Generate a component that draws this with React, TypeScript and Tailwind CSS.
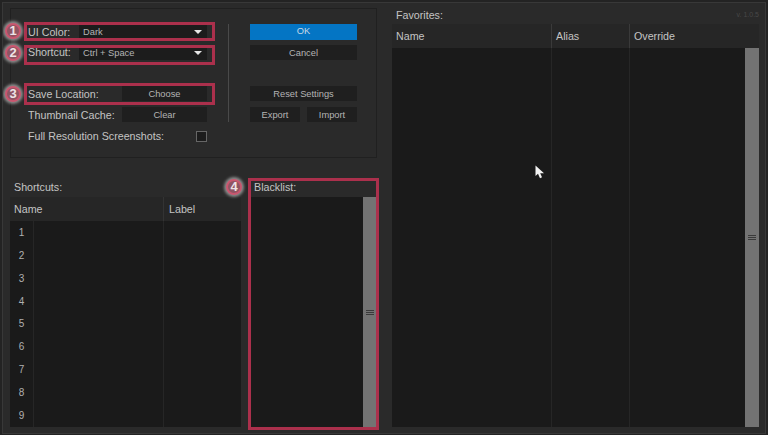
const rows = [1, 2, 3, 4, 5, 6, 7, 8, 9];

const Btn = ({ label, className = '' }: { label: string; className?: string }) => (
  <div className={`flex h-[15px] items-center justify-center bg-[#1f1f1f] pt-[2px] text-[9.3px] text-[#b4b4b4] ${className}`}>
    {label}
  </div>
);

const Select = ({ label }: { label: string }) => (
  <div className="flex h-[15px] w-[128px] items-center justify-between bg-[#1c1c1c] pl-[4px] pr-[5px] text-[9.3px] text-[#b4b4b4]">
    <span className="mt-[2px]">{label}</span>
    <svg width="8" height="4" viewBox="0 0 8 4">
      <path d="M0 0h8L4 4z" fill="#e6e6e6" />
    </svg>
  </div>
);

const Grip = () => (
  <div className="flex w-[8px] flex-col gap-[1px]">
    <div className="h-[1px] bg-[#3a3a3a]" />
    <div className="h-[1px] bg-[#3a3a3a]" />
    <div className="h-[1px] bg-[#3a3a3a]" />
  </div>
);

const Badge = ({ n, className }: { n: number; className: string }) => (
  <div
    className={`absolute flex h-[16px] w-[16px] items-center justify-center rounded-full border-[2px] border-[#c9566f] bg-[#8f5563] text-[13px] font-bold text-[#efe3e6] shadow-[0_0_3px_2px_#8f8f8f] ${className}`}
  >
    {n}
  </div>
);

const RedBox = ({ className }: { className: string }) => (
  <div className={`absolute border-[3px] border-[#ab304c] ${className}`} />
);

export default function App() {
  return (
    <div className="relative flex h-[435px] w-[768px] overflow-hidden bg-[#2a2a2a] font-['Liberation_Sans',Arial,sans-serif] text-[10.7px] text-[#c4c4c4]">
      {/* left column */}
      <div className="flex w-[392px] flex-col pl-[10px] pt-[8px]">
        <div className="flex h-[150px] w-[367px] border border-[#202020] pl-[17px] pr-[19px] pt-[15px]">
          <div className="flex w-[179px] flex-col">
            <div className="flex h-[15px] items-center justify-between">
              <span className="mt-[2px]">UI Color:</span>
              <Select label="Dark" />
            </div>
            <div className="mt-[6px] flex h-[15px] items-center justify-between">
              <span>Shortcut:</span>
              <Select label="Ctrl + Space" />
            </div>
            <div className="mt-[26px] flex h-[15px] items-center justify-between">
              <span className="mt-[2px]">Save Location:</span>
              <Btn label="Choose" className="w-[85px]" />
            </div>
            <div className="mt-[6px] flex h-[15px] items-center justify-between">
              <span className="mt-[2px]">Thumbnail Cache:</span>
              <Btn label="Clear" className="w-[85px]" />
            </div>
            <div className="mt-[6px] flex h-[15px] items-center justify-between pt-[1px]">
              <span>Full Resolution Screenshots:</span>
              <div className="h-[11px] w-[11px] border border-[#666666] bg-[#1c1c1c]" />
            </div>
          </div>
          <div className="ml-[21px] h-[98px] w-[1px] bg-[#4a4a4a]" />
          <div className="ml-[21px] flex w-[107px] flex-col">
            <div className="flex h-[16px] items-center justify-center bg-[#0475c4] text-[9.3px] text-[#c9d9e6]">OK</div>
            <Btn label="Cancel" className="mt-[5px]" />
            <Btn label="Reset Settings" className="mt-[26px]" />
            <div className="mt-[6px] flex justify-between">
              <Btn label="Export" className="w-[50px]" />
              <Btn label="Import" className="w-[50px]" />
            </div>
          </div>
        </div>

        <div className="mt-[20px] flex h-[252px] gap-[7px]">
          <div className="flex w-[231px] flex-col pb-[3px]">
            <div className="flex h-[19px] items-center pl-[4px]">Shortcuts:</div>
            <div className="flex h-[24px] bg-[#262626]">
              <div className="flex w-[154px] items-center border-r border-[#333333] pl-[4px]">Name</div>
              <div className="flex items-center pl-[5px]">Label</div>
            </div>
            <div className="flex flex-1 bg-[#1a1a1a]">
              <div className="grid w-[24px] grid-rows-9 border-r border-[#262626] text-[10px] text-[#b0b0b0]">
                {rows.map((n) => (
                  <div key={n} className="flex items-center justify-center">
                    {n}
                  </div>
                ))}
              </div>
              <div className="w-[130px] border-r border-[#262626]" />
            </div>
          </div>

          <div className="flex w-[131px] flex-col border-[3px] border-[#ab304c]">
            <div className="flex h-[16px] items-center pb-[3px] pl-[3px]">Blacklist:</div>
            <div className="flex flex-1 bg-[#1a1a1a]">
              <div className="flex-1" />
              <div className="flex w-[13px] items-center justify-center bg-[#737373]">
                <Grip />
              </div>
            </div>
          </div>
        </div>
      </div>

      {/* favorites */}
      <div className="flex w-[367px] flex-col pb-[8px] pt-[6px]">
        <div className="flex h-[18px] items-center justify-between pl-[4px]">
          <span>Favorites:</span>
          <span className="text-[7px] text-[#484848]">v. 1.0.5</span>
        </div>
        <div className="flex h-[24px] bg-[#262626]">
          <div className="flex w-[160px] items-center border-r border-[#3a3a3a] pl-[4px]">Name</div>
          <div className="flex w-[78px] items-center border-r border-[#3a3a3a] pl-[4px]">Alias</div>
          <div className="flex items-center pl-[4px]">Override</div>
        </div>
        <div className="relative flex flex-1 bg-[#1a1a1a]">
          <div className="w-[160px] border-r border-[#262626]" />
          <div className="w-[78px] border-r border-[#262626]" />
          <div className="flex-1" />
          <div className="flex w-[14px] items-center justify-center bg-[#737373]">
            <Grip />
          </div>
        </div>
      </div>

      <RedBox className="left-[24px] top-[22px] h-[19px] w-[191px]" />
      <RedBox className="left-[24px] top-[45px] h-[20px] w-[191px]" />
      <RedBox className="left-[24px] top-[83px] h-[22px] w-[191px]" />
      <Badge n={1} className="left-[5px] top-[23px]" />
      <Badge n={2} className="left-[5px] top-[45px]" />
      <Badge n={3} className="left-[5px] top-[86px]" />
      <Badge n={4} className="left-[226px] top-[179px]" />

      <svg className="absolute left-[535px] top-[165px]" width="10" height="14" viewBox="0 0 10 14">
        <path d="M0.5 0.5V11L3 8.8L5 13.2L7 12.3L5.2 8.2H9Z" fill="#f2f2f2" />
      </svg>

      {/* window edge */}
      <div className="pointer-events-none absolute bottom-[1px] left-[2px] right-[2px] top-[2px] border border-[#383838] shadow-[0_0_0_3px_#232323]" />
    </div>
  );
}
